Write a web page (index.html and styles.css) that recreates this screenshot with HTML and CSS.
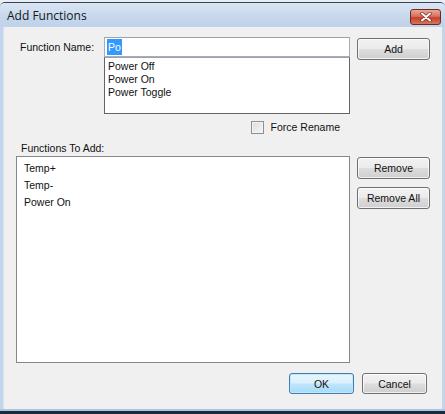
FILE: index.html
```html
<!DOCTYPE html>
<html lang="en">
<head>
  <meta charset="UTF-8" />
  <title>Add Functions</title>
  <link rel="stylesheet" href="styles.css">
</head>
<body>
  <div class="window">
    <div class="titlebar">
      <span class="title">Add Functions</span>
      <button class="close-btn" aria-label="Close">
        <svg width="14" height="10" viewBox="0 0 14 10">
          <path d="M3 1.5 L11 8.5 M11 1.5 L3 8.5" stroke="#7a2a22" stroke-width="3.4" stroke-linecap="round"/>
          <path d="M3 1.5 L11 8.5 M11 1.5 L3 8.5" stroke="#ffffff" stroke-width="2" stroke-linecap="round"/>
        </svg>
      </button>
    </div>

    <div class="client">
      <div class="name-row">
        <label class="name-label" for="fnName">Function Name:</label>
        <div class="combo">
          <div class="textbox" id="fnName"><span class="sel">Po</span></div>
          <ul class="suggest">
            <li>Power Off</li>
            <li>Power On</li>
            <li>Power Toggle</li>
          </ul>
        </div>
        <div class="side">
          <button class="btn">Add</button>
        </div>
      </div>

      <div class="force-row">
        <label class="check"><span class="box"></span>Force Rename</label>
      </div>

      <div class="list-label">Functions To Add:</div>

      <div class="list-row">
        <ul class="listbox">
          <li>Temp+</li>
          <li>Temp-</li>
          <li>Power On</li>
        </ul>
        <div class="side side-stack">
          <button class="btn">Remove</button>
          <button class="btn">Remove All</button>
        </div>
      </div>

      <div class="footer">
        <button class="btn btn-default">OK</button>
        <button class="btn">Cancel</button>
      </div>
    </div>
    <div class="frame-bottom"></div>
  </div>
</body>
</html>
```

FILE: styles.css
```css
body {
  margin: 0;
  background: #e9eef3;
  font-family: 'Liberation Sans', Arial, sans-serif;
  font-size: 10.5px;
  color: #111;
}

.window {
  width: 445px;
  height: 412px;
  margin-top: 2px;
  display: flex;
  flex-direction: column;
  background: linear-gradient(to right, #c3d5ea, #cddcef 50%, #c3d5ea);
  border-top: 1px solid #34465c;
  border-radius: 5px 5px 0 0;
  box-sizing: border-box;
  overflow: hidden;
}

.titlebar {
  height: 24px;
  display: flex;
  align-items: center;
  justify-content: space-between;
  padding: 0 4px 0 7px;
  background: linear-gradient(to bottom, #dbe6f4, #c6d7ec 60%, #bfd2ea);
}

.title {
  font-family: 'Open Sans', 'Liberation Sans', sans-serif;
  font-size: 12px;
  color: #101820;
  margin-top: 1px;
}

.close-btn {
  width: 31px;
  height: 16px;
  margin-top: 3px;
  padding: 0;
  border: 1px solid #6d2a22;
  border-radius: 3px;
  background: linear-gradient(to bottom, #eaa898, #d9705c 45%, #c4402a 55%, #d8765e);
  display: flex;
  align-items: center;
  justify-content: center;
}

.client {
  flex: 1;
  margin: 0 3px 0 3px;
  padding: 10px 12px 0 12px;
  background: #f0f0f0;
  border-left: 1px solid #d9e2ec;
}

.name-row {
  display: flex;
  align-items: flex-start;
}

.name-label {
  width: 84px;
  padding-left: 4px;
  line-height: 20px;
}

.combo {
  width: 246px;
}

.textbox {
  border: 1px solid #abadb3;
  border-top-color: #9aa3ad;
  background: #fff;
  padding: 1px 2px 0 2px;
  height: 17px;
  line-height: 17px;
}

.sel {
  background: #3399ff;
  color: #fff;
  padding: 0 1px;
  display: inline-block;
  line-height: 16px;
}

.suggest {
  list-style: none;
  margin: 0;
  padding: 2px 3px;
  height: 51px;
  border: 1px solid #646464;
  border-top-color: #9aa3ad;
  background: #fff;
}

.suggest li {
  line-height: 13px;
}

.side {
  margin-left: 7px;
  width: 73px;
}

.btn {
  display: block;
  width: 73px;
  height: 22px;
  padding: 0;
  font-family: 'Liberation Sans', Arial, sans-serif;
  font-size: 10.5px;
  color: #111;
  border: 1px solid #707070;
  border-radius: 3px;
  background: linear-gradient(to bottom, #f2f2f2, #ebebeb 48%, #dddddd 52%, #cfcfcf);
  box-shadow: inset 0 0 0 1px rgba(255, 255, 255, 0.7);
}

.side .btn {
  margin-top: 1px;
}

.force-row {
  display: flex;
  justify-content: flex-end;
  width: 330px;
  margin-top: 6px;
  padding-right: 6px;
  box-sizing: border-box;
}

.check {
  display: flex;
  align-items: center;
  gap: 7px;
  line-height: 14px;
}

.box {
  width: 11px;
  height: 11px;
  border: 1px solid #8f8f8f;
  background: linear-gradient(135deg, #dcdcdc, #f6f6f6);
  box-shadow: inset 0 0 0 1px #f4f4f4;
}

.list-label {
  margin-top: 7px;
  padding-left: 5px;
  line-height: 14px;
}

.list-row {
  display: flex;
  align-items: flex-start;
  margin-top: 1px;
}

.listbox {
  list-style: none;
  margin: 0;
  width: 335px;
  height: 207px;
  padding: 3px 7px;
  box-sizing: border-box;
  border: 1px solid #828790;
  background: #fff;
}

.listbox li {
  line-height: 17px;
}

.side-stack {
  display: flex;
  flex-direction: column;
  gap: 7px;
}

.footer {
  display: flex;
  justify-content: flex-end;
  gap: 8px;
  margin-top: 10px;
  padding-right: 3px;
}

.footer .btn {
  width: 65px;
  height: 21px;
}

.btn-default {
  border-color: #3c7fb1;
  background: linear-gradient(to bottom, #eaf6fd, #d9f0fc 48%, #bee6fd 52%, #a7d9f5);
  box-shadow: inset 0 0 0 1px #c6e6f8;
}

.frame-bottom {
  height: 5px;
  background: linear-gradient(to bottom, #a9c6e4 0, #a9c6e4 2px, #1c2a3a 2px);
}
```
